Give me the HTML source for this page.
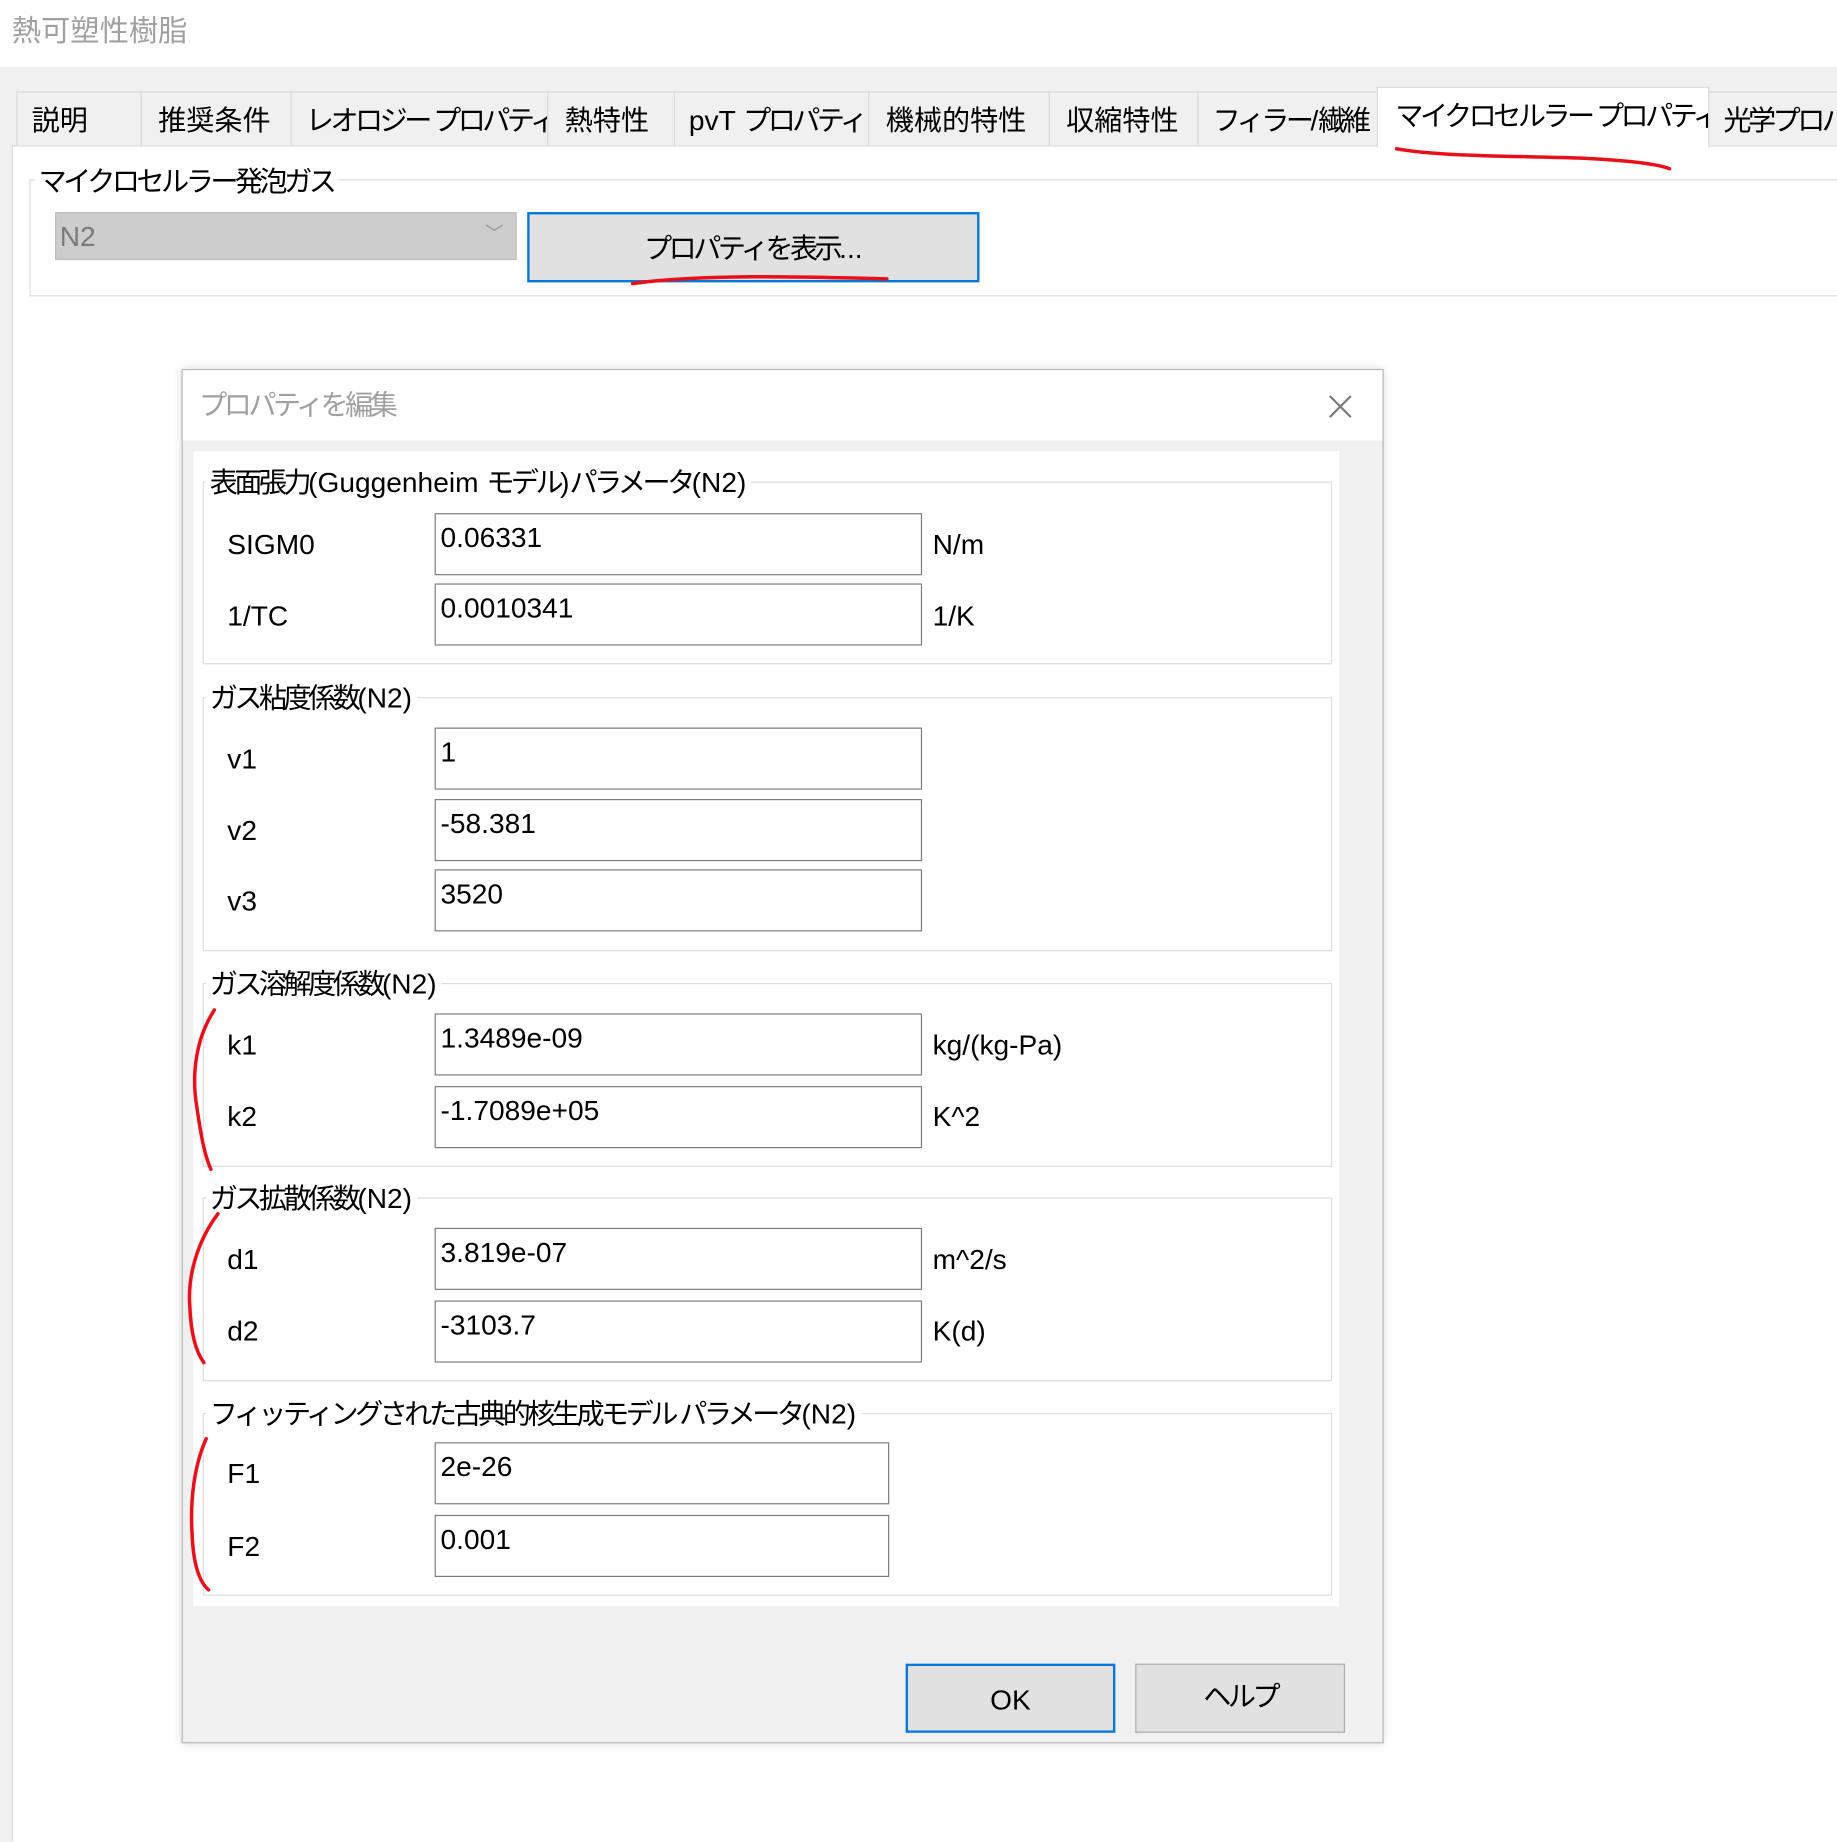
<!DOCTYPE html>
<html><head><meta charset="utf-8"><style>
*{margin:0;padding:0;box-sizing:border-box}
body{width:1837px;height:1841px;overflow:hidden;background:#f0f0f0;font-family:"Liberation Sans","Noto Sans CJK JP",sans-serif}
#s{position:absolute;left:0;top:0;width:1568px;height:1572px;transform:scale(1.1716);transform-origin:0 0;background:#f0f0f0}
.a{position:absolute;white-space:nowrap}
.k{letter-spacing:-3px}
.n{letter-spacing:0}
.tab{position:absolute;top:78px;height:46px;border:1px solid #d9d9d9;border-bottom:none;background:#f0f0f0;font-size:24px;line-height:50px;padding-left:12px;white-space:nowrap;overflow:hidden}
.g{position:absolute;border:1px solid #dcdcdc}
.gl{position:absolute;background:#fff;font-size:24px;line-height:30px;padding:0 4px 0 3px;white-space:nowrap;letter-spacing:-3px}
.in{position:absolute;left:371px;width:416px;height:53px;background:#fff;border:1px solid #7a7a7a;font-size:24px;line-height:30px;padding:6px 0 0 4px}
.lb{position:absolute;left:194px;font-size:24px;line-height:30px}
.un{position:absolute;left:796px;font-size:24px;line-height:30px;white-space:nowrap}
</style></head><body><div id="s">
<div class="a" style="left:0;top:0;width:1568px;height:57px;background:#fff"></div>
<div class="a" style="left:10px;top:11px;font-size:25px;color:#a0a0a0;line-height:32px">熱可塑性樹脂</div>
<div class="a" style="left:10px;top:124px;width:1558px;height:1448px;background:#fff;border-left:1px solid #d9d9d9;border-top:1px solid #d9d9d9"></div>
<div class="tab" style="left:14px;width:107px">説明</div>
<div class="tab" style="left:120px;width:129px;padding-left:14px">推奨条件</div>
<div class="tab k" style="left:248px;width:220px">レオロジー プロパティ</div>
<div class="tab" style="left:467px;width:109px;padding-left:14px">熱特性</div>
<div class="tab k" style="left:575px;width:167px"><span class="n">pvT </span>プロパティ</div>
<div class="tab" style="left:741px;width:155px;padding-left:14px">機械的特性</div>
<div class="tab" style="left:895px;width:128px;padding-left:14px">収縮特性</div>
<div class="tab k" style="left:1022px;width:154px">フィラー<span class="n">/</span>繊維</div>
<div class="tab k" style="left:1175px;top:74px;height:52px;width:284px;background:#fff;line-height:50px;padding-left:15px">マイクロセルラー プロパティ</div>
<div class="tab k" style="left:1458px;width:120px">光学プロパ</div>
<div class="g" style="left:25px;top:153px;width:1560px;height:100px"></div>
<div class="gl" style="left:30px;top:141px">マイクロセルラー発泡ガス</div>
<div class="a" style="left:47px;top:181px;width:394px;height:41px;background:#cccccc;border:1px solid #bdbdbd;font-size:24px;color:#7a7a7a;line-height:42px;padding-left:3px">N2<span style="position:absolute;right:10px;top:-2px;font-size:16px;color:#999">﹀</span></div>
<div class="a k" style="left:450px;top:181px;width:386px;height:60px;background:#e1e1e1;border:2px solid #0078d7;font-size:24px;text-align:center;line-height:60px">プロパティを表示<span class="n">...</span></div>
<svg class="a" style="left:0;top:0" width="1568" height="1572"><g fill="none" stroke="#e8101a" stroke-width="3" stroke-linecap="round">
<path d="M540 242 C600 234 680 236 757 238"/>
<path d="M1192 127 C1230 134 1300 133 1350 135 C1390 137 1415 140 1425 144"/>
</g></svg>
<div class="a" style="left:155px;top:315px;width:1026px;height:1173px;background:#f0f0f0;border:1px solid #b4b4b4;box-shadow:0 0 8px rgba(0,0,0,.15)"></div>
<div class="a" style="left:156px;top:316px;width:1024px;height:60px;background:#fff"></div>
<div class="a k" style="left:170px;top:332px;font-size:24px;color:#a0a0a0;line-height:30px">プロパティを編集</div>
<svg class="a" style="left:1134px;top:337px" width="20" height="20"><path d="M1 1L19 19M19 1L1 19" stroke="#777" stroke-width="1.8"/></svg>
<div class="a" style="left:165px;top:385px;width:978px;height:986px;background:#fff"></div>

<div class="g" style="left:173px;top:411px;width:964px;height:156px"></div>
<div class="gl" style="left:176px;top:398px">表面張力<span class="n">(Guggenheim </span>モデル<span class="n">)</span>パラメータ<span class="n">(N2)</span></div>
<div class="lb" style="top:451px">SIGM0</div><div class="in" style="top:438px">0.06331</div><div class="un" style="top:451px">N/m</div>
<div class="lb" style="top:512px">1/TC</div><div class="in" style="top:498px">0.0010341</div><div class="un" style="top:512px">1/K</div>

<div class="g" style="left:173px;top:595px;width:964px;height:217px"></div>
<div class="gl" style="left:176px;top:582px">ガス粘度係数<span class="n">(N2)</span></div>
<div class="lb" style="top:634px">v1</div><div class="in" style="top:621px">1</div>
<div class="lb" style="top:695px">v2</div><div class="in" style="top:682px">-58.381</div>
<div class="lb" style="top:755px">v3</div><div class="in" style="top:742px">3520</div>

<div class="g" style="left:173px;top:839px;width:964px;height:157px"></div>
<div class="gl" style="left:176px;top:826px">ガス溶解度係数<span class="n">(N2)</span></div>
<div class="lb" style="top:878px">k1</div><div class="in" style="top:865px">1.3489e-09</div><div class="un" style="top:878px">kg/(kg-Pa)</div>
<div class="lb" style="top:939px">k2</div><div class="in" style="top:927px">-1.7089e+05</div><div class="un" style="top:939px">K^2</div>

<div class="g" style="left:173px;top:1022px;width:964px;height:157px"></div>
<div class="gl" style="left:176px;top:1009px">ガス拡散係数<span class="n">(N2)</span></div>
<div class="lb" style="top:1061px">d1</div><div class="in" style="top:1048px">3.819e-07</div><div class="un" style="top:1061px">m^2/s</div>
<div class="lb" style="top:1122px">d2</div><div class="in" style="top:1110px">-3103.7</div><div class="un" style="top:1122px">K(d)</div>

<div class="g" style="left:173px;top:1206px;width:964px;height:156px"></div>
<div class="gl" style="left:176px;top:1193px">フィッティングされた古典的核生成モデル パラメータ<span class="n">(N2)</span></div>
<div class="lb" style="top:1244px">F1</div><div class="in" style="top:1231px;width:388px">2e-26</div>
<div class="lb" style="top:1306px">F2</div><div class="in" style="top:1293px;width:388px">0.001</div>

<div class="a" style="left:773px;top:1420px;width:179px;height:59px;background:#e1e1e1;border:2px solid #0078d7;font-size:24px;text-align:center;line-height:60px">OK</div>
<div class="a k" style="left:969px;top:1420px;width:179px;height:59px;background:#e1e1e1;border:1px solid #adadad;font-size:24px;text-align:center;line-height:56px">ヘルプ</div>

<svg class="a" style="left:0;top:0" width="1568" height="1572"><g fill="none" stroke="#e8101a" stroke-width="3" stroke-linecap="round">
<path d="M183 862 C168 885 163 915 168 945 C171 965 174 985 180 998"/>
<path d="M186 1036 C168 1060 160 1090 162 1115 C163 1140 168 1155 174 1163"/>
<path d="M176 1228 C166 1250 162 1280 164 1310 C165 1335 170 1350 178 1357"/>
</g></svg>
</div></body></html>
